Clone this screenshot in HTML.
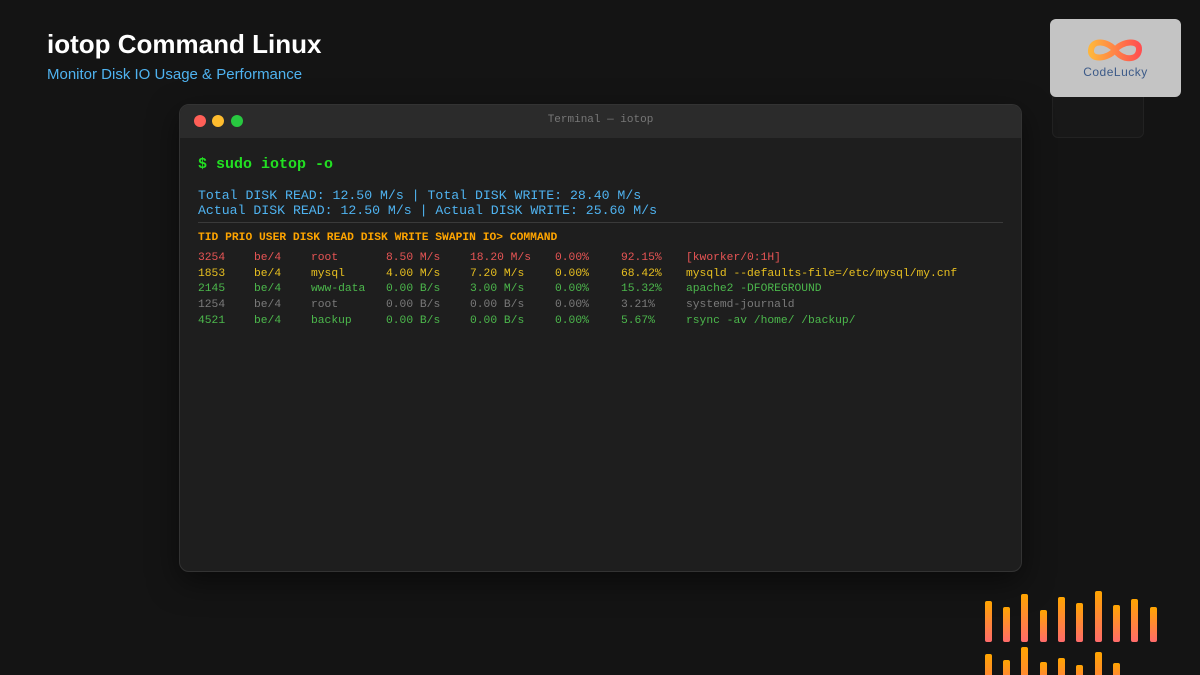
<!DOCTYPE html>
<html style="overflow:hidden;height:675px"><head><meta charset="utf-8"><style>
body{margin:0;width:1200px;height:675px;background:#141414;overflow:hidden;position:relative;font-family:"Liberation Sans",sans-serif}
.t{position:absolute;left:47px;top:29px;color:#fff;font-weight:bold;font-size:26px}
.s{position:absolute;left:47px;top:66px;color:#4fb3f0;font-size:15px}
.term{position:absolute;left:179px;top:104px;width:841px;height:466px;background:#1e1e1e;border:1px solid #333;border-radius:10px;overflow:hidden;box-shadow:0 10px 30px rgba(0,0,0,.5)}
.bar{height:33px;background:#2b2b2b;position:relative}
.dot{position:absolute;top:10px;width:12px;height:12px;border-radius:50%}
.tt{position:absolute;left:0;right:0;top:9px;text-align:center;color:#777;font:11px "Liberation Mono",monospace}
.m{font-family:"Liberation Mono",monospace;position:absolute;white-space:pre}
.row{position:absolute;left:18px;font:11.3px "Liberation Mono",monospace;white-space:pre}
.row span{position:absolute}
.logo{position:absolute;left:1050px;top:19px;width:131px;height:78px;background:#c4c4c4;border-radius:6px}
.ghost{position:absolute;left:1052px;top:70px;width:90px;height:66px;border:1px solid #222;border-radius:6px;background:#181818}
.b{position:absolute;width:7px;border-radius:2px;background:linear-gradient(#ffa500,#ff6b6b)}
.bb{position:absolute;width:7px;border-radius:2px 2px 0 0;background:linear-gradient(#ffa500,#ff8a30);bottom:0}
</style></head><body>
<div class="t">iotop Command Linux</div>
<div class="s">Monitor Disk IO Usage &amp; Performance</div>
<div class="ghost"></div>
<div class="logo">
<svg width="131" height="78" viewBox="0 0 131 78"><defs><linearGradient id="g" x1="0" x2="1"><stop offset="0" stop-color="#ffb53c"/><stop offset="1" stop-color="#ff5050"/></linearGradient></defs>
<path d="M65 31 C58 22 42 20 41 31 C40 42 58 40 65 31 C72 22 90 20 89 31 C88 42 72 42 65 31" fill="none" stroke="url(#g)" stroke-width="6"/></svg>
<div style="position:absolute;left:0;right:0;top:46px;text-align:center;color:#3c5a88;font-size:12px;letter-spacing:.5px">CodeLucky</div>
</div>
<div class="term">
<div class="bar"><div class="dot" style="left:14px;background:#ff5f57"></div><div class="dot" style="left:32px;background:#febc2e"></div><div class="dot" style="left:51px;background:#28c840"></div><div class="tt">Terminal — iotop</div></div>
<div class="m" style="left:18px;top:51px;color:#22e022;font-weight:bold;font-size:15px">$ sudo iotop -o</div>
<div class="m" style="left:18px;top:83px;color:#4fb3f0;font-size:13.2px;line-height:15px">Total DISK READ: 12.50 M/s | Total DISK WRITE: 28.40 M/s
Actual DISK READ: 12.50 M/s | Actual DISK WRITE: 25.60 M/s</div>
<div style="position:absolute;left:18px;right:18px;top:117px;height:1px;background:#3a3a3a"></div>
<div class="m" style="left:18px;top:127px;color:#ffa500;font-weight:bold;font-size:11.3px">TID PRIO USER DISK READ DISK WRITE SWAPIN IO&gt; COMMAND</div>
<div class="row" style="top:147px;color:#e85555"><span style="left:0">3254</span><span style="left:56px">be/4</span><span style="left:113px">root</span><span style="left:188px">8.50 M/s</span><span style="left:272px">18.20 M/s</span><span style="left:357px">0.00%</span><span style="left:423px">92.15%</span><span style="left:488px">[kworker/0:1H]</span></div>
<div class="row" style="top:163px;color:#e8c020"><span style="left:0">1853</span><span style="left:56px">be/4</span><span style="left:113px">mysql</span><span style="left:188px">4.00 M/s</span><span style="left:272px">7.20 M/s</span><span style="left:357px">0.00%</span><span style="left:423px">68.42%</span><span style="left:488px">mysqld --defaults-file=/etc/mysql/my.cnf</span></div>
<div class="row" style="top:178px;color:#4cb84c"><span style="left:0">2145</span><span style="left:56px">be/4</span><span style="left:113px">www-data</span><span style="left:188px">0.00 B/s</span><span style="left:272px">3.00 M/s</span><span style="left:357px">0.00%</span><span style="left:423px">15.32%</span><span style="left:488px">apache2 -DFOREGROUND</span></div>
<div class="row" style="top:194px;color:#7a7a7a"><span style="left:0">1254</span><span style="left:56px">be/4</span><span style="left:113px">root</span><span style="left:188px">0.00 B/s</span><span style="left:272px">0.00 B/s</span><span style="left:357px">0.00%</span><span style="left:423px">3.21%</span><span style="left:488px">systemd-journald</span></div>
<div class="row" style="top:210px;color:#4cb84c"><span style="left:0">4521</span><span style="left:56px">be/4</span><span style="left:113px">backup</span><span style="left:188px">0.00 B/s</span><span style="left:272px">0.00 B/s</span><span style="left:357px">0.00%</span><span style="left:423px">5.67%</span><span style="left:488px">rsync -av /home/ /backup/</span></div>
</div>
<div class="b" style="left:985px;top:601px;height:41px"></div>
<div class="b" style="left:1003px;top:607px;height:35px"></div>
<div class="b" style="left:1021px;top:594px;height:48px"></div>
<div class="b" style="left:1040px;top:610px;height:32px"></div>
<div class="b" style="left:1058px;top:597px;height:45px"></div>
<div class="b" style="left:1076px;top:603px;height:39px"></div>
<div class="b" style="left:1095px;top:591px;height:51px"></div>
<div class="b" style="left:1113px;top:605px;height:37px"></div>
<div class="b" style="left:1131px;top:599px;height:43px"></div>
<div class="b" style="left:1150px;top:607px;height:35px"></div>
<div class="bb" style="left:985px;height:21px"></div>
<div class="bb" style="left:1003px;height:15px"></div>
<div class="bb" style="left:1021px;height:28px"></div>
<div class="bb" style="left:1040px;height:13px"></div>
<div class="bb" style="left:1058px;height:17px"></div>
<div class="bb" style="left:1076px;height:10px"></div>
<div class="bb" style="left:1095px;height:23px"></div>
<div class="bb" style="left:1113px;height:12px"></div>
</body></html>
